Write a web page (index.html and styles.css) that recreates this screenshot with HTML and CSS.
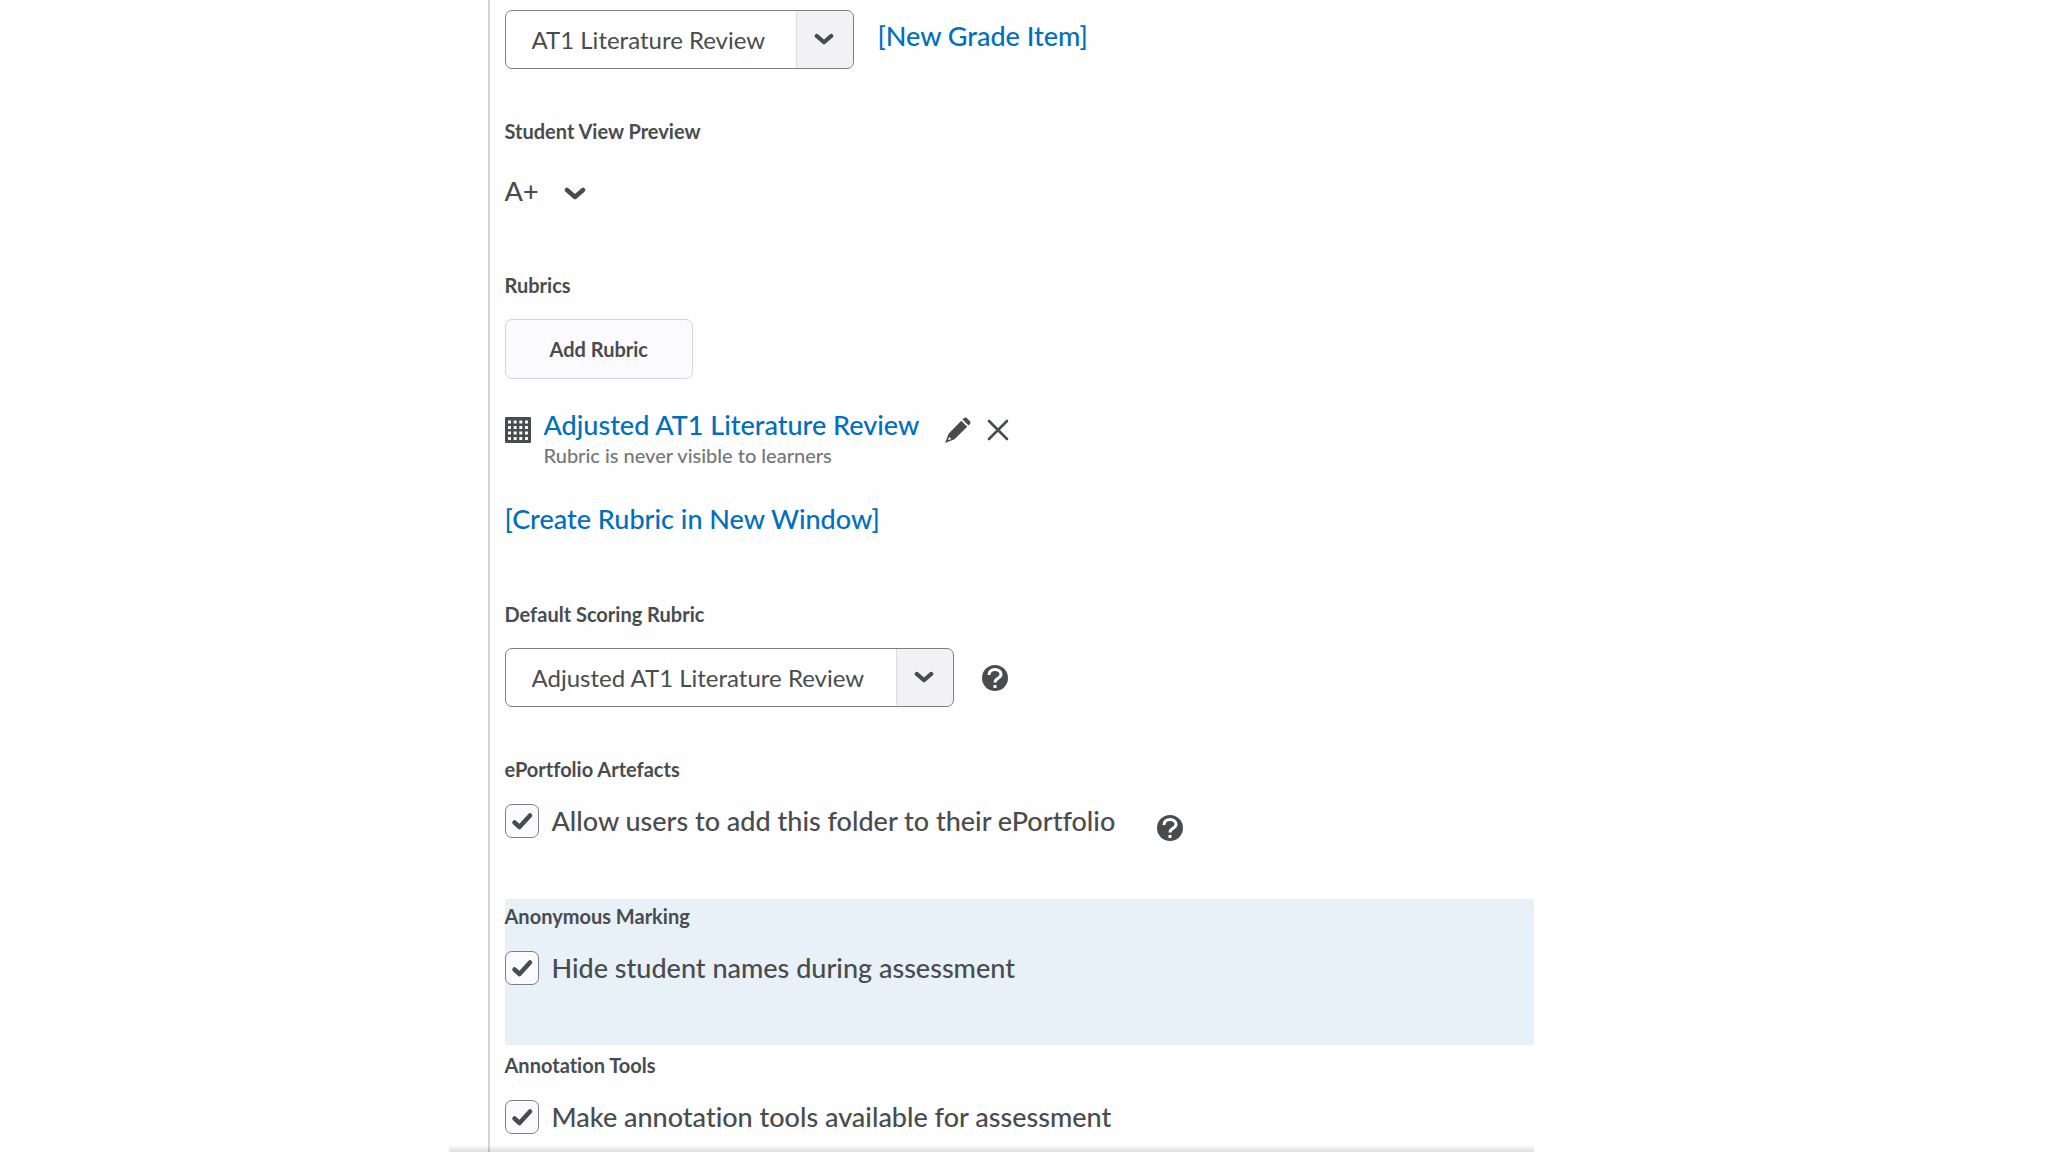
FILE: index.html
```html
<!DOCTYPE html>
<html lang="en">
<head>
    <meta charset="UTF-8">
    <meta name="viewport" content="width=device-width, initial-scale=1.0">
    <title>Edit Folder</title>
    <link rel="stylesheet" href="styles.css">
</head>
<body>
    <form class="page">
        <div class="panel">
            <div class="field grade-field">
                <select class="dropdown" aria-label="Grade Item">
                    <option>AT1 Literature Review</option>
                </select>
                <a class="link" href="#">[New Grade Item]</a>
            </div>

            <section class="field preview-field">
                <h3>Student View Preview</h3>
                <button type="button" class="preview">
                    A+
                    <svg class="chevron" viewBox="0 0 22 14"><path d="M3 3l8 7 8-7" fill="none" stroke="#494c4e" stroke-width="4.500" stroke-linecap="round" stroke-linejoin="round"/></svg>
                </button>
            </section>

            <section class="field rubrics-field">
                <h3>Rubrics</h3>
                <button type="button" class="add-button">Add Rubric</button>
                <div class="rubric">
                    <svg class="grid-icon" viewBox="0 0 26 26">
                        <rect width="26" height="26" rx="1" fill="#494c4e"/>
                        <path d="M3 5h20M3 10.500h20M3 16h20M3 21.500h20" stroke="#fff" stroke-width="3" stroke-dasharray="3 2.660"/>
                    </svg>
                    <div>
                        <a class="link" href="#">Adjusted AT1 Literature Review</a>
                        <p class="note">Rubric is never visible to learners</p>
                    </div>
                    <button type="button" class="icon-button edit" aria-label="Edit rubric">
                        <svg viewBox="0 0 26 26" fill="#494c4e">
                            <path d="M18.800 1.300c1-1 2.300-1 3.300 0l2.600 2.600c1 1 1 2.300 0 3.300l-1.200 1.200-5.900-5.900z"/>
                            <path fill-rule="evenodd" d="M16.300 3.800l5.900 5.900L9.500 22.300 0 26l3.700-9.500zM4.300 20l-1.500 3.300 3.500-1.300z"/>
                        </svg>
                    </button>
                    <button type="button" class="icon-button" aria-label="Remove rubric">
                        <svg viewBox="0 0 26 26"><path d="M4 4l18 18M22 4L4 22" stroke="#494c4e" stroke-width="2.600" stroke-linecap="round"/></svg>
                    </button>
                </div>
                <a class="link" href="#">[Create Rubric in New Window]</a>
            </section>

            <section class="field scoring-field">
                <h3><label for="scoring">Default Scoring Rubric</label></h3>
                <div class="row">
                    <select class="dropdown" id="scoring">
                        <option>Adjusted AT1 Literature Review</option>
                    </select>
                    <button type="button" class="icon-button" aria-label="Help">
                        <svg viewBox="0 0 26 26">
                            <circle cx="13" cy="13" r="13" fill="#494c4e"/>
                            <path d="M7 10C7 6.500 9.500 4.500 13 4.500s6 2 6 5c0 4-6 3.500-6 8" fill="none" stroke="#fff" stroke-width="3"/>
                            <rect x="11.500" y="20" width="3" height="3" fill="#fff"/>
                        </svg>
                    </button>
                </div>
            </section>

            <section class="field portfolio-field">
                <h3>ePortfolio Artefacts</h3>
                <div class="row row-top">
                    <label class="check"><input type="checkbox" checked>Allow users to add this folder to their ePortfolio</label>
                    <button type="button" class="icon-button" aria-label="Help">
                        <svg viewBox="0 0 26 26">
                            <circle cx="13" cy="13" r="13" fill="#494c4e"/>
                            <path d="M7 10C7 6.500 9.500 4.500 13 4.500s6 2 6 5c0 4-6 3.500-6 8" fill="none" stroke="#fff" stroke-width="3"/>
                            <rect x="11.500" y="20" width="3" height="3" fill="#fff"/>
                        </svg>
                    </button>
                </div>
            </section>

            <section class="field highlight">
                <h3>Anonymous Marking</h3>
                <label class="check"><input type="checkbox" checked>Hide student names during assessment</label>
            </section>

            <section class="field">
                <h3>Annotation Tools</h3>
                <label class="check"><input type="checkbox" checked>Make annotation tools available for assessment</label>
            </section>
        </div>
        <div class="footer-shadow"></div>
    </form>
</body>
</html>
```
FILE: styles.css
```css
* {
    box-sizing: border-box;
}
body {
    margin: 0;
    background-color: #fefefe;
    color: #494c4e;
    font-family: Lato, "Liberation Sans", sans-serif;
    font-size: 27px;
    font-weight: 500;
    font-variant-ligatures: none;
    line-height: 36px;
}
.page {
    width: 53%;
    min-width: 800px;
    height: 100vh;
    margin-left: 21.9%;
    overflow: hidden;
}
.panel {
    min-height: 100vh;
    margin-left: 39px;
    padding: 10px 0 0 15px;
    border-left: 2px solid #d3d5d8;
}
h3 {
    margin: 0 0 22px;
    font-size: 20px;
    line-height: 24px;
}
button {
    font-family: inherit;
    font-weight: inherit;
    color: inherit;
    cursor: pointer;
}
svg {
    display: block;
}
.grade-field {
    display: flex;
    gap: 24px;
    margin-bottom: 50px;
}
.grade-field .link {
    margin-top: 8px;
}
.preview-field {
    margin-bottom: 64px;
}
.rubrics-field {
    margin-bottom: 65px;
}
.scoring-field {
    margin-bottom: 50px;
}
.portfolio-field {
    margin-bottom: 58px;
}
.highlight {
    margin-bottom: 8px;
    padding: 5px 0 59px;
    background-color: #e8f0f8;
}
.row {
    display: flex;
    align-items: center;
    gap: 28px;
}
.row-top {
    align-items: flex-start;
    gap: 42px;
}
.row-top .icon-button {
    margin-top: 12px;
}
.link {
    display: block;
    color: #006fbf;
    text-decoration: none;
}
.dropdown {
    appearance: none;
    height: 59px;
    padding: 0 87px 0 26px;
    border: 1px solid #7c8084;
    border-radius: 7px;
    background:
        url("data:image/svg+xml,%3Csvg xmlns='http://www.w3.org/2000/svg' viewBox='0 0 22 14'%3E%3Cpath d='M3 3l8 7 8-7' fill='none' stroke='%23494c4e' stroke-width='4.500' stroke-linecap='round' stroke-linejoin='round'/%3E%3C/svg%3E") right 19px center / 20px 13px no-repeat,
        linear-gradient(#dcdee0, #dcdee0) right 56px top / 1px 100% no-repeat,
        linear-gradient(#f2f2f4, #f2f2f4) right top / 56px 100% no-repeat,
        #fff;
    color: inherit;
    font-family: inherit;
    font-size: 24px;
}
.preview {
    display: flex;
    align-items: center;
    gap: 25px;
    margin-top: 30px;
    padding: 0;
    border: none;
    background: none;
    font-size: 27px;
    line-height: 36px;
}
.chevron {
    width: 22px;
    height: 14px;
    margin-top: 6px;
}
.add-button {
    display: block;
    height: 60px;
    padding: 0 44px;
    border: 1px solid #d3d5dc;
    border-radius: 7px;
    background-color: #fbfbff;
    font-size: 20px;
    font-weight: bold;
}
.rubric {
    display: flex;
    margin: 28px 0 34px;
}
.grid-icon {
    width: 26px;
    height: 26px;
    margin: 10px 13px 0 0;
}
.note {
    margin: 0;
    color: #72777a;
    font-size: 20px;
    line-height: 24px;
}
.icon-button {
    width: 26px;
    height: 26px;
    padding: 0;
    border: none;
    background: none;
}
.rubric .icon-button {
    margin: 10px 0 0 14px;
}
.rubric .edit {
    margin-left: 26px;
}
.check {
    display: flex;
    align-items: center;
    gap: 13px;
}
.check input {
    appearance: none;
    flex: none;
    width: 34px;
    height: 34px;
    margin: 0;
    border: 1px solid #7c8084;
    border-radius: 7px;
    background-color: #fbfbff;
}
.check input:checked {
    background-image: url("data:image/svg+xml,%3Csvg xmlns='http://www.w3.org/2000/svg' viewBox='0 0 32 32'%3E%3Cpath d='M8.500 17.500l5 4.500L24 10.500' fill='none' stroke='%23494c4e' stroke-width='4.500' stroke-linecap='round' stroke-linejoin='round'/%3E%3C/svg%3E");
}
.footer-shadow {
    position: fixed;
    bottom: 0;
    width: 53%;
    min-width: 800px;
    height: 7px;
    background: linear-gradient(rgba(0, 0, 0, 0), rgba(0, 0, 0, 0.12));
}
```
